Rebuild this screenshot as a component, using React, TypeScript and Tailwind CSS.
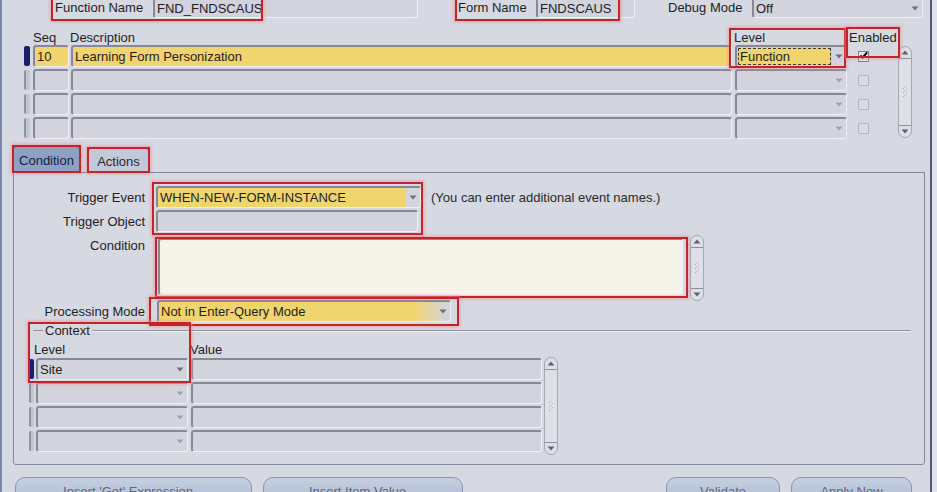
import React from "react";

const FB =
  "border-t-2 border-l-2 border-r border-b border-t-[#85889a] border-l-[#85889a] border-r-[#eef0f5] border-b-[#eef0f5] rounded-[3px]";

function Arrow({ light }: { light?: boolean }) {
  return (
    <svg width="8" height="5" viewBox="0 0 8 5" className="shrink-0">
      <path d="M0.5 0.5H7.5L4 4.5Z" fill={light ? "#9fa2b0" : "#6b6f80"} />
    </svg>
  );
}

function Field({ className = "", children }: { className?: string; children?: React.ReactNode }) {
  return (
    <div className={`${FB} flex items-center pl-[2px] overflow-hidden whitespace-nowrap ${className}`}>
      {children}
    </div>
  );
}

function Combo({
  className = "",
  children,
  light,
}: {
  className?: string;
  children?: React.ReactNode;
  light?: boolean;
}) {
  return (
    <div className={`${FB} flex items-stretch overflow-hidden whitespace-nowrap ${className}`}>
      <div className="flex-1 min-w-0 flex items-center pl-[2px]">{children}</div>
      <div className="w-[14px] flex items-center justify-center bg-[#d3d4dd]">
        <Arrow light={light} />
      </div>
    </div>
  );
}

function Grip() {
  return (
    <svg width="8" height="16" viewBox="0 0 8 16">
      <path d="M2 5L5 2M2 9L6 5M2 13L6 9" stroke="#9a9eae" strokeWidth="1" strokeDasharray="1 1" />
    </svg>
  );
}

function VScroll({ className = "" }: { className?: string }) {
  return (
    <div
      className={`flex flex-col w-[14px] rounded-[7px] border border-[#a3a7b6] bg-[#dedfe7] overflow-hidden shrink-0 ${className}`}
    >
      <div className="h-[12px] flex items-center justify-center border-b border-[#8d91a2]">
        <svg width="8" height="5" viewBox="0 0 8 5">
          <path d="M0.5 4.5H7.5L4 0.5Z" fill="#5f6374" />
        </svg>
      </div>
      <div className="flex-1 flex items-center justify-center">
        <Grip />
      </div>
      <div className="h-[12px] flex items-center justify-center border-t border-[#8d91a2]">
        <svg width="8" height="5" viewBox="0 0 8 5">
          <path d="M0.5 0.5H7.5L4 4.5Z" fill="#5f6374" />
        </svg>
      </div>
    </div>
  );
}

function Check({ checked }: { checked?: boolean }) {
  return (
    <div
      className={`w-[11px] h-[11px] border flex items-center justify-center ${
        checked ? "border-[#7d8090] bg-[#e6e7ee]" : "border-[#b3b6c3] bg-[#d9dae2]"
      }`}
    >
      {checked && (
        <svg width="10" height="9" viewBox="0 0 10 9" className="-mt-[2px]">
          <path d="M1.5 4.5L4 7L9 1" stroke="#000" strokeWidth="2.2" fill="none" />
        </svg>
      )}
    </div>
  );
}

function Ind({ active, small }: { active?: boolean; small?: boolean }) {
  if (active)
    return <div className={`${small ? "w-[5px]" : "w-[6px]"} h-[20px] rounded-[2px] bg-[#1b1d70]`} />;
  return (
    <div
      className={`${small ? "w-[5px]" : "w-[6px]"} h-[20px] rounded-[2px] bg-[#c3c5d0] border-l-2 border-[#8d91a2]`}
    />
  );
}

const RED =
  "absolute border-2 border-[#c3232a] shadow-[0_0_3px_1px_rgba(240,140,140,0.7)] pointer-events-none";

export default function App() {
  const rows = [0, 1, 2, 3];
  return (
    <div className="relative w-[937px] h-[492px] overflow-hidden flex bg-[#d6d8e2] text-[13px] leading-[15px] text-[#1e1e1e] font-['Liberation_Sans',Arial,sans-serif]">
      <div className="w-[932px] h-full flex flex-col border-l-2 border-l-[#7d87a8] border-r-2 border-r-[#4f587a] shrink-0">
        {/* top row */}
        <div className="flex items-center h-[21px] -mt-[3px] pl-[53px] shrink-0">
          <div className="w-[98px]">Function Name</div>
          <Field className="w-[265px] h-[21px] bg-[#d2d3dc]">FND_FNDSCAUS</Field>
          <div className="ml-[40px] w-[78px]">Form Name</div>
          <Field className="w-[99px] h-[21px] bg-[#d2d3dc]">FNDSCAUS</Field>
          <div className="ml-[33px] w-[84px]">Debug Mode</div>
          <Combo className="w-[171px] h-[21px] bg-[#d2d3dc]">Off</Combo>
        </div>

        {/* header */}
        <div className="h-[27px] flex items-end pl-[31px] shrink-0">
          <div className="w-[37px]">Seq</div>
          <div className="w-[664px]">Description</div>
          <div className="w-[115px]">Level</div>
          <div>Enabled</div>
        </div>

        {/* rows */}
        <div className="flex pl-[22px] shrink-0">
          <div className="flex flex-col gap-[2px]">
            {rows.map((i) => (
              <div key={i} className="flex items-center h-[22px]">
                <Ind active={i === 0} />
                <Field className={`ml-[3px] w-[36px] h-[22px] ${i === 0 ? "bg-[#f0d46e]" : "bg-[#d2d3dc]"}`}>
                  {i === 0 ? "10" : ""}
                </Field>
                <Field className={`ml-[2px] w-[661px] h-[22px] ${i === 0 ? "bg-[#f0d46e]" : "bg-[#d2d3dc]"}`}>
                  {i === 0 ? "Learning Form Personization" : ""}
                </Field>
                {i === 0 ? (
                  <div className={`${FB} ml-[3px] w-[112px] h-[22px] flex items-stretch overflow-hidden bg-[#f0d46e]`}>
                    <div className="flex-1 flex items-center p-[1px]">
                      <div className="w-full h-full border border-dashed border-[#3a3a3a] flex items-center pl-[1px]">
                        Function
                      </div>
                    </div>
                    <div className="w-[14px] flex items-center justify-center bg-[#d3d4dd]">
                      <Arrow />
                    </div>
                  </div>
                ) : (
                  <Combo light className="ml-[3px] w-[112px] h-[22px] bg-[#d2d3dc]" />
                )}
                <div className="ml-[11px]">
                  <Check checked={i === 0} />
                </div>
              </div>
            ))}
          </div>
          <VScroll className="ml-[29px] mt-[1px] h-[92px]" />
        </div>

        {/* tabs */}
        <div className="flex items-end h-[26px] mt-[7px] pl-[11px] shrink-0">
          <div className="w-[67px] h-[26px] rounded-t-[4px] border-t border-l border-r border-[#6c7896] bg-[#8ea1c4] flex items-center justify-center pt-[2px] text-[#16203a]">
            Condition
          </div>
          <div className="ml-[8px] w-[61px] h-[24px] rounded-t-[4px] border-t border-l border-r border-[#8d93a8] bg-[#c4c9da] flex items-center justify-center pt-[1px] text-[#2a2a2a]">
            Actions
          </div>
        </div>

        {/* panel */}
        <div className="ml-[11px] w-[912px] h-[293px] border border-[#80869b] rounded-b-[3px] flex flex-col shrink-0">
          <div className="flex items-center h-[22px] mt-[13px]">
            <div className="w-[131px] text-right">Trigger Event</div>
            <Combo className="ml-[11px] w-[265px] h-[22px] bg-[#f0d46e]">WHEN-NEW-FORM-INSTANCE</Combo>
            <div className="ml-[10px] text-[#2a2a2a]">(You can enter additional event names.)</div>
          </div>
          <div className="flex items-center h-[22px] mt-[2px]">
            <div className="w-[131px] text-right">Trigger Object</div>
            <Field className="ml-[11px] w-[262px] h-[22px] bg-[#d2d3dc]" />
          </div>
          <div className="flex items-start h-[57px] mt-[6px]">
            <div className="w-[131px] text-right">Condition</div>
            <Field className="ml-[13px] w-[525px] h-[57px] bg-[#f6f4ea]" />
            <VScroll className="ml-[7px] -mt-[3px] h-[66px]" />
          </div>
          <div className="flex items-center h-[22px] mt-[5px]">
            <div className="w-[131px] text-right">Processing Mode</div>
            <div className={`${FB} ml-[12px] w-[294px] h-[22px] flex items-stretch overflow-hidden bg-gradient-to-r from-[#f0d46e] from-[88%] to-[#d3d4dd]`}>
              <div className="flex-1 flex items-center pl-[2px]">Not in Enter-Query Mode</div>
              <div className="w-[14px] flex items-center justify-center">
                <Arrow />
              </div>
            </div>
          </div>

          {/* context legend */}
          <div className="flex items-center h-[14px] mt-[1px] ml-[19px] w-[878px]">
            <div className="w-[10px] h-px bg-[#8f94a6]" />
            <div className="px-[2px] text-[#1e1e1e]">Context</div>
            <div className="flex-1 h-px bg-[#8f94a6] shadow-[0_1px_0_#eceef3]" />
          </div>
          <div className="flex items-end h-[14px] mt-[6px] pl-[20px]">
            <div className="w-[156px]">Level</div>
            <div>Value</div>
          </div>
          <div className="flex mt-[1px] pl-[15px]">
            <div className="flex flex-col gap-[2px]">
              {rows.map((i) => (
                <div key={i} className="flex items-center h-[22px]">
                  <Ind small active={i === 0} />
                  <Combo light={i !== 0} className="ml-[2px] w-[152px] h-[22px] bg-[#d2d3dc]">
                    {i === 0 ? "Site" : ""}
                  </Combo>
                  <Field className="ml-[3px] w-[351px] h-[22px] bg-[#d2d3dc]" />
                </div>
              ))}
            </div>
            <VScroll className="ml-[2px] -mt-[1px] h-[98px]" />
          </div>
        </div>

        {/* buttons */}
        <div className="flex mt-[12px] pl-[13px] shrink-0 text-[#5f677a]">
          <div className="w-[237px] h-[24px] rounded-t-[10px] border border-[#8b95ad] bg-gradient-to-b from-[#c6d0e2] to-[#afbcd4] flex justify-center pt-[6px]">
            Insert 'Get' Expression...
          </div>
          <div className="ml-[11px] w-[200px] h-[24px] rounded-t-[10px] border border-[#8b95ad] bg-gradient-to-b from-[#c6d0e2] to-[#afbcd4] flex justify-center pt-[6px]">
            Insert Item Value...
          </div>
          <div className="ml-[203px] w-[114px] h-[24px] rounded-t-[10px] border border-[#8b95ad] bg-gradient-to-b from-[#c6d0e2] to-[#afbcd4] flex justify-center pt-[6px]">
            Validate
          </div>
          <div className="ml-[11px] w-[121px] h-[24px] rounded-t-[10px] border border-[#8b95ad] bg-gradient-to-b from-[#c6d0e2] to-[#afbcd4] flex justify-center pt-[6px]">
            Apply Now
          </div>
        </div>
      </div>
      <div className="flex-1 h-full bg-[#e2e3ea]" />

      {/* annotation boxes */}
      <div className={`${RED} left-[51px] top-[-3px] w-[212px] h-[24px]`} />
      <div className={`${RED} left-[455px] top-[-3px] w-[165px] h-[24px]`} />
      <div className={`${RED} left-[729px] top-[28px] w-[117px] h-[40px]`} />
      <div className={`${RED} left-[846px] top-[27px] w-[54px] h-[31px]`} />
      <div className={`${RED} left-[12px] top-[145px] w-[69px] h-[28px]`} />
      <div className={`${RED} left-[87px] top-[147px] w-[63px] h-[26px]`} />
      <div className={`${RED} left-[152px] top-[182px] w-[271px] h-[53px]`} />
      <div className={`${RED} left-[155px] top-[237px] w-[533px] h-[61px]`} />
      <div className={`${RED} left-[149px] top-[297px] w-[310px] h-[29px]`} />
      <div className={`${RED} left-[28px] top-[322px] w-[163px] h-[61px]`} />
    </div>
  );
}
